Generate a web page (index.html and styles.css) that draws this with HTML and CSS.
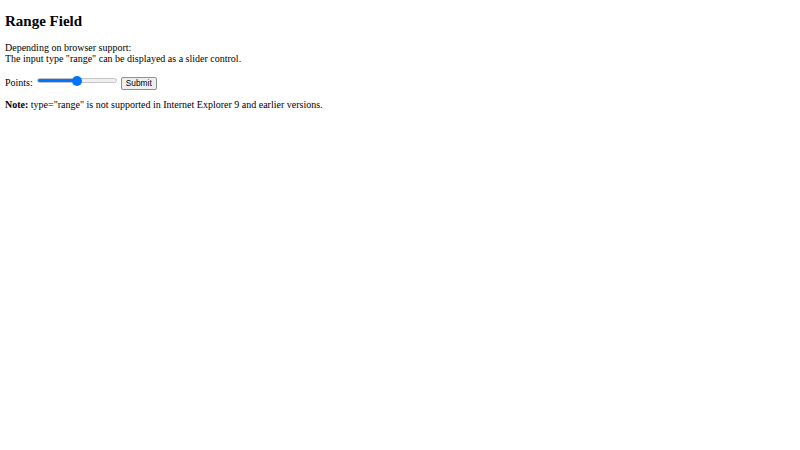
FILE: index.html
```html
<!DOCTYPE html>
<html>
<head>
<meta charset="utf-8">
<link rel="stylesheet" href="styles.css">
</head>
<body class="page">
<h2 class="title">Range Field</h2>
<p class="text">Depending on browser support:<br>The input type "range" can be displayed as a slider control.</p>
<form class="form">
  <span class="label">Points:</span>
  <input class="slider" type="range" name="points" min="0" max="10">
  <input class="submit" type="submit" value="Submit">
</form>
<p class="text note"><b>Note:</b> type="range" is not supported in Internet Explorer 9 and earlier versions.</p>
</body>
</html>
```
FILE: styles.css
```css
.page {
  font-family: "Liberation Serif", "Times New Roman", serif;
  font-size: 10px;
  margin: 5px;
  color: #000;
  background: #fff;
}
.title {
  font-size: 15px;
  font-weight: bold;
  margin: 7.5px 0 12.45px;
}
.text {
  margin: 10px 0;
}
.form {
  margin: 12px 0 0;
  display: flex;
  align-items: center;
  height: 14px;
}
.label {
  margin-right: 3px;
}
.slider {
  -webkit-appearance: none;
  appearance: none;
  width: 80px;
  height: 10px;
  margin: 0 2px 0 1px;
  padding: 0;
  background: transparent;
  position: relative;
  top: -2px;
}
.slider::-webkit-slider-runnable-track {
  height: 5px;
  border-radius: 3px;
  box-sizing: border-box;
  border: 1px solid #c4c4c4;
  background: linear-gradient(to right, #0075ff 50%, #efefef 50%);
}
.slider::-webkit-slider-thumb {
  -webkit-appearance: none;
  appearance: none;
  width: 10px;
  height: 10px;
  border-radius: 50%;
  background: #0075ff;
  border: none;
  margin-top: -3.5px;
}
.submit {
  font-family: "Liberation Sans", Arial, sans-serif;
  font-size: 8.33px;
  line-height: 9.6px;
  margin: 0 1px 0 2px;
  padding: 1px 4px;
  border: 1px solid #8f8f8f;
  border-radius: 2px;
  background: #efefef;
  color: #000;
  height: 13px;
  box-sizing: border-box;
  position: relative;
  top: 1px;
}
.note {
  margin-top: 9px;
}
```
